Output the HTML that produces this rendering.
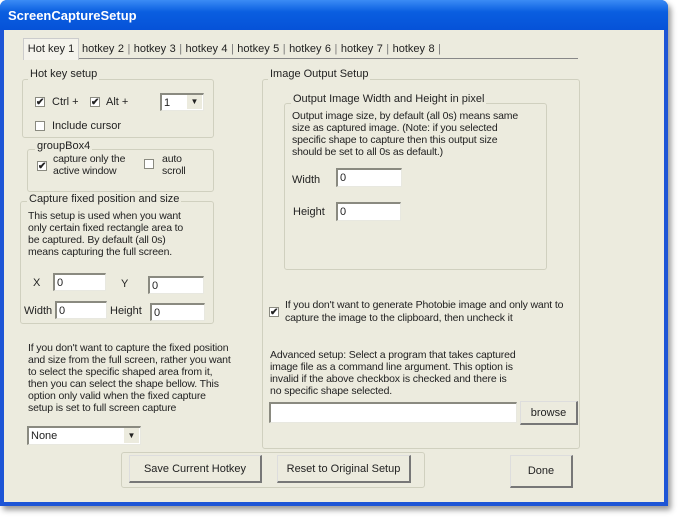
<!DOCTYPE html><html><head><style>
body{margin:0;width:680px;height:517px;background:#fff;position:relative;overflow:hidden;font-family:"Liberation Sans",sans-serif;font-size:11px;color:#222}
.a{position:absolute}
.win{left:0;top:0;width:668px;height:506px;background:#1d55d6;border-radius:7px 7px 0 0;box-shadow:3px 4px 6px #999}
.title{left:0;top:0;width:668px;height:30px;background:linear-gradient(#3b8cf5,#0a5ee0 40%,#0652d8);border-radius:7px 7px 0 0}
.body{left:4px;top:30px;width:660px;height:472px;background:#ecebde}
.g{border:1px solid #d0d0bf;border-radius:3px}
.lg{background:#ecebde;padding:0 2px}
.in{background:#fff;border-top:2px solid #8a8a80;border-left:2px solid #8a8a80;border-right:1px solid #e8e8e0;border-bottom:1px solid #e8e8e0;box-sizing:border-box;padding-left:2px;line-height:16px}
.cb{width:10px;height:10px;border:1px solid #8a8a80;background:#fff;box-sizing:border-box;font-size:10px;line-height:9px;text-align:center;font-weight:bold}
.btn{background:#ecebde;border:1px solid #ddd;border-right:2px solid #777;border-bottom:2px solid #777;box-sizing:border-box;text-align:center}
.t{white-space:nowrap}
.p{font-size:10.5px;letter-spacing:-0.15px}
</style></head><body>
<div class="a win"></div><div class="a title"></div>
<div class="a t" style="left:8px;top:8px;color:#fff;font-weight:bold;font-size:13px">ScreenCaptureSetup</div>
<div class="a body"></div>
<!-- tabs -->
<div class="a" style="left:23px;top:58px;width:555px;height:1px;background:#888"></div>
<div class="a t" style="left:23px;top:38px;width:54px;height:21px;background:#f4f3ec;border:1px solid #ccc;border-bottom:none;line-height:20px;text-align:center">Hot key 1</div>
<div class="a t" style="left:82px;top:42px;line-height:14px;word-spacing:0.4px">hotkey 2 <span style="color:#777">|</span> hotkey 3 <span style="color:#777">|</span> hotkey 4 <span style="color:#777">|</span> hotkey 5 <span style="color:#777">|</span> hotkey 6 <span style="color:#777">|</span> hotkey 7 <span style="color:#777">|</span> hotkey 8 <span style="color:#777">|</span></div>
<!-- hot key setup -->
<div class="a g" style="left:22px;top:79px;width:190px;height:57px"></div>
<div class="a t lg" style="left:28px;top:68px">Hot key setup</div>
<div class="a cb" style="left:35px;top:97px">✔</div><div class="a t" style="left:52px;top:96px">Ctrl +</div>
<div class="a cb" style="left:90px;top:97px">✔</div><div class="a t" style="left:106px;top:96px">Alt +</div>
<div class="a in" style="left:160px;top:93px;width:44px;height:18px">1</div>
<div class="a" style="left:187px;top:95px;width:15px;height:14px;background:#ecebde;font-size:8px;text-align:center;line-height:14px">▼</div>
<div class="a cb" style="left:35px;top:121px"></div><div class="a t" style="left:52px;top:120px">Include cursor</div>
<!-- groupbox4 -->
<div class="a g" style="left:27px;top:149px;width:185px;height:41px"></div>
<div class="a t lg" style="left:35px;top:140px">groupBox4</div>
<div class="a cb" style="left:37px;top:161px">✔</div>
<div class="a p" style="left:53px;top:153px;line-height:12px">capture only the<br>active window</div>
<div class="a cb" style="left:144px;top:159px"></div>
<div class="a p" style="left:162px;top:153px;line-height:12px">auto<br>scroll</div>
<!-- capture fixed -->
<div class="a g" style="left:20px;top:201px;width:192px;height:121px"></div>
<div class="a t lg" style="left:27px;top:193px">Capture fixed position and size</div>
<div class="a p" style="left:28px;top:210px;line-height:12px;width:185px">This setup is used when you want<br>only certain fixed rectangle area to<br>be captured. By default (all 0s)<br>means capturing the full screen.</div>
<div class="a t" style="left:33px;top:277px">X</div><div class="a in" style="left:53px;top:273px;width:53px;height:18px">0</div>
<div class="a t" style="left:121px;top:278px">Y</div><div class="a in" style="left:148px;top:276px;width:56px;height:18px">0</div>
<div class="a t" style="left:24px;top:305px">Width</div><div class="a in" style="left:55px;top:301px;width:52px;height:18px">0</div>
<div class="a t" style="left:110px;top:305px">Height</div><div class="a in" style="left:150px;top:303px;width:55px;height:18px">0</div>
<div class="a p" style="left:28px;top:342px;line-height:12px">If you don't want to capture the fixed position<br>and size from the full screen, rather you want<br>to select the specific shaped area from it,<br>then you can select the shape bellow.  This<br>option only valid when the fixed capture<br>setup is set to full screen capture</div>
<div class="a in" style="left:27px;top:426px;width:114px;height:19px">None</div>
<div class="a" style="left:124px;top:428px;width:15px;height:15px;background:#ecebde;font-size:8px;text-align:center;line-height:15px">▼</div>
<!-- image output -->
<div class="a g" style="left:262px;top:79px;width:316px;height:368px"></div>
<div class="a t lg" style="left:268px;top:68px">Image Output Setup</div>
<div class="a g" style="left:284px;top:103px;width:261px;height:165px"></div>
<div class="a t lg" style="left:291px;top:93px">Output Image Width and Height in pixel</div>
<div class="a p" style="left:292px;top:110px;line-height:12px">Output image size, by default (all 0s) means same<br>size as captured image.  (Note: if you selected<br>specific shape to capture then this output size<br>should be set to all 0s as default.)</div>
<div class="a t" style="left:292px;top:174px">Width</div><div class="a in" style="left:336px;top:168px;width:66px;height:19px">0</div>
<div class="a t" style="left:293px;top:206px">Height</div><div class="a in" style="left:336px;top:202px;width:65px;height:19px">0</div>
<div class="a cb" style="left:269px;top:307px">✔</div>
<div class="a p" style="left:285px;top:299px;line-height:13px">If you don't want to generate Photobie image and only want to<br>capture the image to the clipboard, then uncheck it</div>
<div class="a p" style="left:270px;top:349px;line-height:12px">Advanced setup: Select a program that takes captured<br>image file as a command line argument. This option is<br>invalid if the above checkbox is checked and there is<br>no specific  shape selected.</div>
<div class="a in" style="left:269px;top:402px;width:248px;height:21px"></div>
<div class="a btn" style="left:520px;top:401px;width:58px;height:24px;line-height:22px">browse</div>
<!-- bottom -->
<div class="a g" style="left:121px;top:452px;width:302px;height:34px"></div>
<div class="a btn" style="left:129px;top:455px;width:133px;height:28px;line-height:26px">Save Current Hotkey</div>
<div class="a btn" style="left:277px;top:455px;width:134px;height:28px;line-height:26px">Reset to Original Setup</div>
<div class="a btn" style="left:510px;top:455px;width:63px;height:33px;line-height:31px">Done</div>
</body></html>
